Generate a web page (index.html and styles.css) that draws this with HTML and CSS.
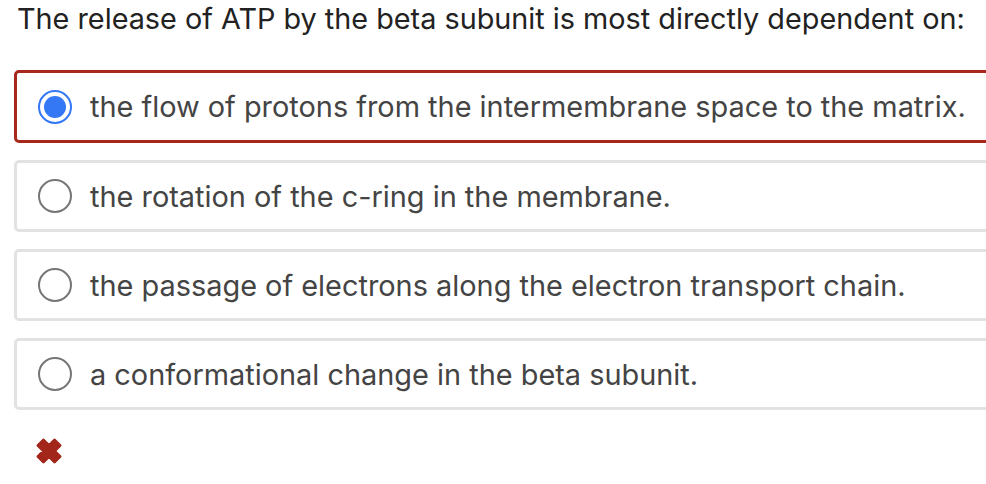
FILE: index.html
```html
<!DOCTYPE html>
<html>
<head>
<meta charset="utf-8">
<link rel="stylesheet" href="styles.css">
</head>
<body>
<div class="page">
  <h1 class="question">The release of ATP by the beta subunit is most directly dependent on:</h1>
  <div class="options">
    <div class="option selected">
      <span class="radio checked"></span>
      <span class="label">the flow of protons from the intermembrane space to the matrix.</span>
    </div>
    <div class="option">
      <span class="radio"></span>
      <span class="label">the rotation of the c-ring in the membrane.</span>
    </div>
    <div class="option">
      <span class="radio"></span>
      <span class="label">the passage of electrons along the electron transport chain.</span>
    </div>
    <div class="option">
      <span class="radio"></span>
      <span class="label">a conformational change in the beta subunit.</span>
    </div>
  </div>
  <div class="result">
    <svg class="cross" width="36" height="36" viewBox="0 0 26 26">
      <path d="M5 9 L9 5 L13 9 L17 5 L21 9 L17 13 L21 17 L17 21 L13 17 L9 21 L5 17 L9 13 Z" fill="#a3261b" stroke="#a3261b" stroke-width="2" stroke-linejoin="round"/>
    </svg>
  </div>
</div>
</body>
</html>
```

FILE: styles.css
```css
html, body {
  margin: 0;
  padding: 0;
  background: #ffffff;
  overflow: hidden;
}
.page {
  width: 1010px;
  padding: 0 0 0 14px;
  font-family: Inter, "Noto Sans", sans-serif;
}
.question {
  margin: 0;
  padding-top: 0;
  font-size: 28.8px;
  font-weight: 400;
  line-height: 38px;
  color: #222222;
  padding-left: 3px;
  white-space: nowrap;
}
.options {
  margin-top: 32px;
  display: flex;
  flex-direction: column;
  gap: 17px;
}
.option {
  display: flex;
  align-items: center;
  height: 66px;
  border: 3px solid #e2e2e2;
  border-radius: 5px;
  padding-left: 21px;
}
.option.selected {
  border-color: #a8271c;
  height: 67px;
}
.radio {
  box-sizing: border-box;
  width: 34px;
  height: 34px;
  border-radius: 50%;
  border: 2px solid #767676;
  flex: none;
  position: relative;
}
.radio.checked {
  border-color: #3478f6;
}
.radio.checked::after {
  content: "";
  position: absolute;
  left: 4px;
  top: 4px;
  width: 22px;
  height: 22px;
  border-radius: 50%;
  background: #3478f6;
}
.label {
  margin-left: 18px;
  font-size: 28.9px;
  color: #444444;
  white-space: nowrap;
}
.result {
  margin-top: 23px;
  padding-left: 17px;
}
.cross {
  display: block;
}
```
